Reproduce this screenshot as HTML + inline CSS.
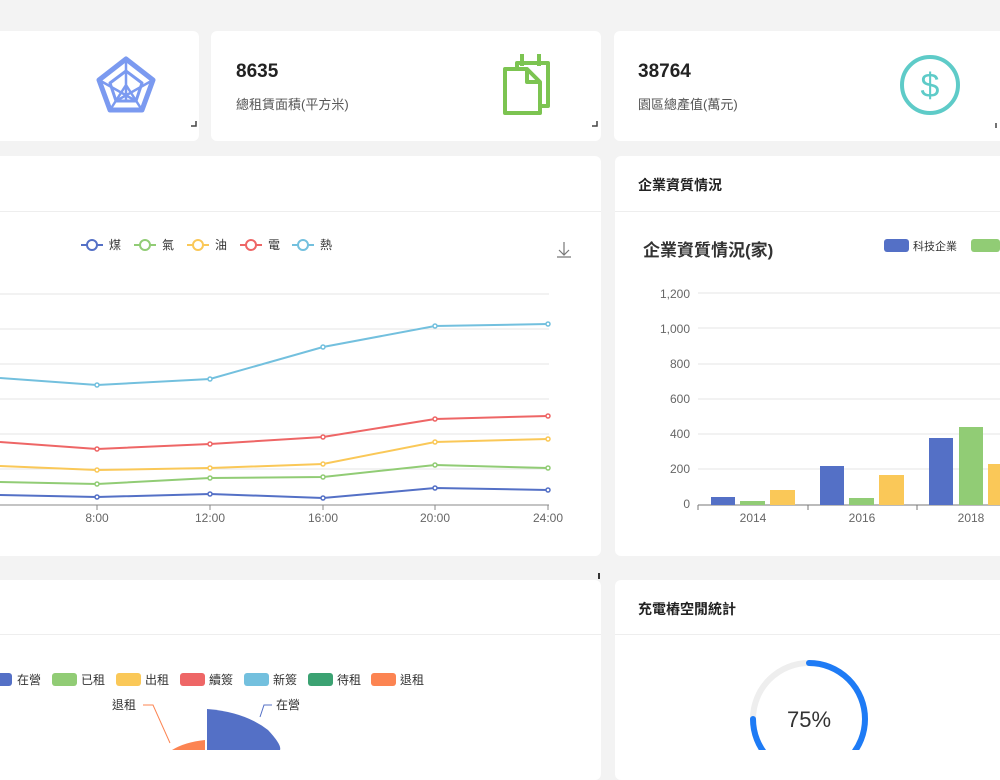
<!DOCTYPE html><html><head><meta charset="utf-8"><style>
body{margin:0;width:1000px;height:750px;overflow:hidden;background:#f3f3f3;font-family:"Liberation Sans","Noto Sans CJK TC",sans-serif;position:relative}
.c{position:absolute;background:#fff;border-radius:6px}
.num{position:absolute;font-size:19px;font-weight:bold;color:#222}
.lab{position:absolute;font-size:13px;color:#555}
.h{position:absolute;font-size:14px;font-weight:bold;color:#222}
.line{position:absolute;height:1px;background:#eee}
svg{position:absolute;left:0;top:0}
</style></head><body>
<div class="c" style="left:-10px;top:31px;width:209px;height:110px"></div>
<div class="c" style="left:211px;top:31px;width:390px;height:110px"></div>
<div class="c" style="left:614px;top:31px;width:400px;height:110px"></div>
<div class="num" style="left:236px;top:61px">8635</div>
<div class="lab" style="left:236px;top:94px">總租賃面積(平方米)</div>
<div class="num" style="left:638px;top:61px">38764</div>
<div class="lab" style="left:638px;top:94px">園區總產值(萬元)</div>

<div class="c" style="left:-10px;top:156px;width:611px;height:400px"></div>
<div class="line" style="left:0;top:211px;width:601px"></div>
<div class="c" style="left:615px;top:156px;width:400px;height:400px"></div>
<div class="line" style="left:615px;top:211px;width:385px"></div>
<div class="h" style="left:638px;top:175px">企業資質情況</div>
<div style="position:absolute;left:643px;top:236px;font-size:17px;font-weight:bold;color:#333">企業資質情況(家)</div>

<div class="c" style="left:-10px;top:580px;width:611px;height:200px"></div>
<div class="line" style="left:0;top:634px;width:601px"></div>
<div class="c" style="left:615px;top:580px;width:400px;height:200px"></div>
<div class="line" style="left:615px;top:634px;width:385px"></div>
<div class="h" style="left:638px;top:599px">充電樁空閒統計</div>

<svg width="1000" height="750" font-family="Liberation Sans,Noto Sans CJK TC,sans-serif">
<!-- card icons -->
<g fill="none" stroke="#7b9af0" stroke-linejoin="round">
<polygon points="126,59 153,80 142,110 110,110 99,80" stroke-width="5"/>
<polygon points="126,71 142,83 136,101 116,101 110,83" stroke-width="3"/>
<path d="M126,59V101M153,80L116,101M99,80L136,101M142,110L126,85M110,110L126,85" stroke-width="2.5"/>
</g>
<g fill="#fff" stroke="#7cc451" stroke-width="4" stroke-linejoin="round">
<path d="M517,63H548V106H517Z"/><path d="M522,54V66M539,54V66" fill="none"/>
<path d="M505,69H527L540,82V113H505Z"/><path d="M527,69V82H540" fill="none"/>
</g>
<circle cx="930" cy="85" r="28" fill="none" stroke="#5ecbc8" stroke-width="4"/>
<text x="930" y="97" font-size="34" fill="#5ecbc8" text-anchor="middle">$</text>
<path d="M196,121V126H191M597,121V126H592" stroke="#444" stroke-width="1.5" fill="none"/>
<path d="M996,123V128" stroke="#444" stroke-width="1.5"/>
<!-- line chart -->
<g stroke="#e6e6e6"><path d="M0,294H549M0,329H549M0,364H549M0,399H549M0,434H549M0,469H549"/></g>
<path d="M0,505H549" stroke="#888"/>
<path d="M97,505v5M210,505v5M323,505v5M435,505v5M548,505v5" stroke="#888"/>
<g font-size="12" fill="#666" text-anchor="middle"><text x="97" y="522">8:00</text><text x="210" y="522">12:00</text><text x="323" y="522">16:00</text><text x="435" y="522">20:00</text><text x="548" y="522">24:00</text></g>
<g fill="none" stroke-width="2">
<polyline stroke="#5470c6" points="0,495 97,497 210,494 323,498 435,488 548,490"/>
<polyline stroke="#91cc75" points="0,482 97,484 210,478 323,477 435,465 548,468"/>
<polyline stroke="#fac858" points="0,466 97,470 210,468 323,464 435,442 548,439"/>
<polyline stroke="#ee6666" points="0,442 97,449 210,444 323,437 435,419 548,416"/>
<polyline stroke="#73c0de" points="0,378 97,385 210,379 323,347 435,326 548,324"/>
</g>
<g fill="#fff" stroke-width="1.5">
<g stroke="#5470c6"><circle cx="97" cy="497" r="2"/><circle cx="210" cy="494" r="2"/><circle cx="323" cy="498" r="2"/><circle cx="435" cy="488" r="2"/><circle cx="548" cy="490" r="2"/></g>
<g stroke="#91cc75"><circle cx="97" cy="484" r="2"/><circle cx="210" cy="478" r="2"/><circle cx="323" cy="477" r="2"/><circle cx="435" cy="465" r="2"/><circle cx="548" cy="468" r="2"/></g>
<g stroke="#fac858"><circle cx="97" cy="470" r="2"/><circle cx="210" cy="468" r="2"/><circle cx="323" cy="464" r="2"/><circle cx="435" cy="442" r="2"/><circle cx="548" cy="439" r="2"/></g>
<g stroke="#ee6666"><circle cx="97" cy="449" r="2"/><circle cx="210" cy="444" r="2"/><circle cx="323" cy="437" r="2"/><circle cx="435" cy="419" r="2"/><circle cx="548" cy="416" r="2"/></g>
<g stroke="#73c0de"><circle cx="97" cy="385" r="2"/><circle cx="210" cy="379" r="2"/><circle cx="323" cy="347" r="2"/><circle cx="435" cy="326" r="2"/><circle cx="548" cy="324" r="2"/></g>
</g>
<g font-size="12" fill="#333" stroke-width="2">
<path d="M81,245h22" stroke="#5470c6"/><circle cx="92" cy="245" r="5" fill="#fff" stroke="#5470c6"/><text x="109" y="249">煤</text>
<path d="M134,245h22" stroke="#91cc75"/><circle cx="145" cy="245" r="5" fill="#fff" stroke="#91cc75"/><text x="162" y="249">氣</text>
<path d="M187,245h22" stroke="#fac858"/><circle cx="198" cy="245" r="5" fill="#fff" stroke="#fac858"/><text x="215" y="249">油</text>
<path d="M240,245h22" stroke="#ee6666"/><circle cx="251" cy="245" r="5" fill="#fff" stroke="#ee6666"/><text x="268" y="249">電</text>
<path d="M292,245h22" stroke="#73c0de"/><circle cx="303" cy="245" r="5" fill="#fff" stroke="#73c0de"/><text x="320" y="249">熱</text>
</g>
<path d="M564,242v13M559,250l5,5l5,-5M557,257h14" stroke="#777" stroke-width="1.2" fill="none"/>
<!-- bar chart -->
<g stroke="#e6e6e6"><path d="M698,293H1000M698,328H1000M698,364H1000M698,399H1000M698,434H1000M698,469H1000"/></g>
<path d="M698,505H1000M698,505v5M808,505v5M917,505v5" stroke="#777"/>
<g font-size="12" fill="#666" text-anchor="end"><text x="690" y="298">1,200</text><text x="690" y="333">1,000</text><text x="690" y="368">800</text><text x="690" y="403">600</text><text x="690" y="438">400</text><text x="690" y="473">200</text><text x="690" y="508">0</text></g>
<g font-size="12" fill="#666" text-anchor="middle"><text x="753" y="522">2014</text><text x="862" y="522">2016</text><text x="971" y="522">2018</text></g>
<g fill="#5470c6"><rect x="711" y="497" width="24" height="8"/><rect x="820" y="466" width="24" height="39"/><rect x="929" y="438" width="24" height="67"/></g>
<g fill="#91cc75"><rect x="740" y="501" width="25" height="4"/><rect x="849" y="498" width="25" height="7"/><rect x="959" y="427" width="24" height="78"/></g>
<g fill="#fac858"><rect x="770" y="490" width="25" height="15"/><rect x="879" y="475" width="25" height="30"/><rect x="988" y="464" width="12" height="41"/></g>
<rect x="884" y="239" width="25" height="13" rx="3" fill="#5470c6"/><text x="913" y="250" font-size="11" fill="#333">科技企業</text>
<rect x="971" y="239" width="29" height="13" rx="3" fill="#91cc75"/>
<!-- pie legend -->
<g font-size="12" fill="#333">
<rect x="-10" y="673" width="22" height="13" rx="3" fill="#5470c6"/><text x="17" y="684">在營</text>
<rect x="52" y="673" width="25" height="13" rx="3" fill="#91cc75"/><text x="81" y="684">已租</text>
<rect x="116" y="673" width="25" height="13" rx="3" fill="#fac858"/><text x="145" y="684">出租</text>
<rect x="180" y="673" width="25" height="13" rx="3" fill="#ee6666"/><text x="209" y="684">續簽</text>
<rect x="244" y="673" width="25" height="13" rx="3" fill="#73c0de"/><text x="273" y="684">新簽</text>
<rect x="308" y="673" width="25" height="13" rx="3" fill="#3ba272"/><text x="337" y="684">待租</text>
<rect x="371" y="673" width="25" height="13" rx="3" fill="#fc8452"/><text x="400" y="684">退租</text>
<text x="112" y="709">退租</text><text x="276" y="709">在營</text>
</g>
<path d="M143,705h10l17,38" stroke="#fc8452" fill="none"/>
<path d="M272,705h-8l-4,12" stroke="#5470c6" fill="none"/>
<path d="M207,709Q245,712 268,730Q282,745 280,750H207Z" fill="#5470c6"/>
<path d="M205,740Q185,742 172,750H205Z" fill="#fc8452"/>
<!-- gauge -->
<circle cx="809" cy="719" r="56" fill="none" stroke="#eeeeee" stroke-width="6"/>
<path d="M809,663A56,56 0 1 1 753,719" fill="none" stroke="#1e7bf5" stroke-width="6" stroke-linecap="round"/>
<text x="809" y="727" font-size="22" fill="#333" text-anchor="middle">75%</text>
<path d="M599,573v6" stroke="#333" stroke-width="2"/>
</svg>
</body></html>
